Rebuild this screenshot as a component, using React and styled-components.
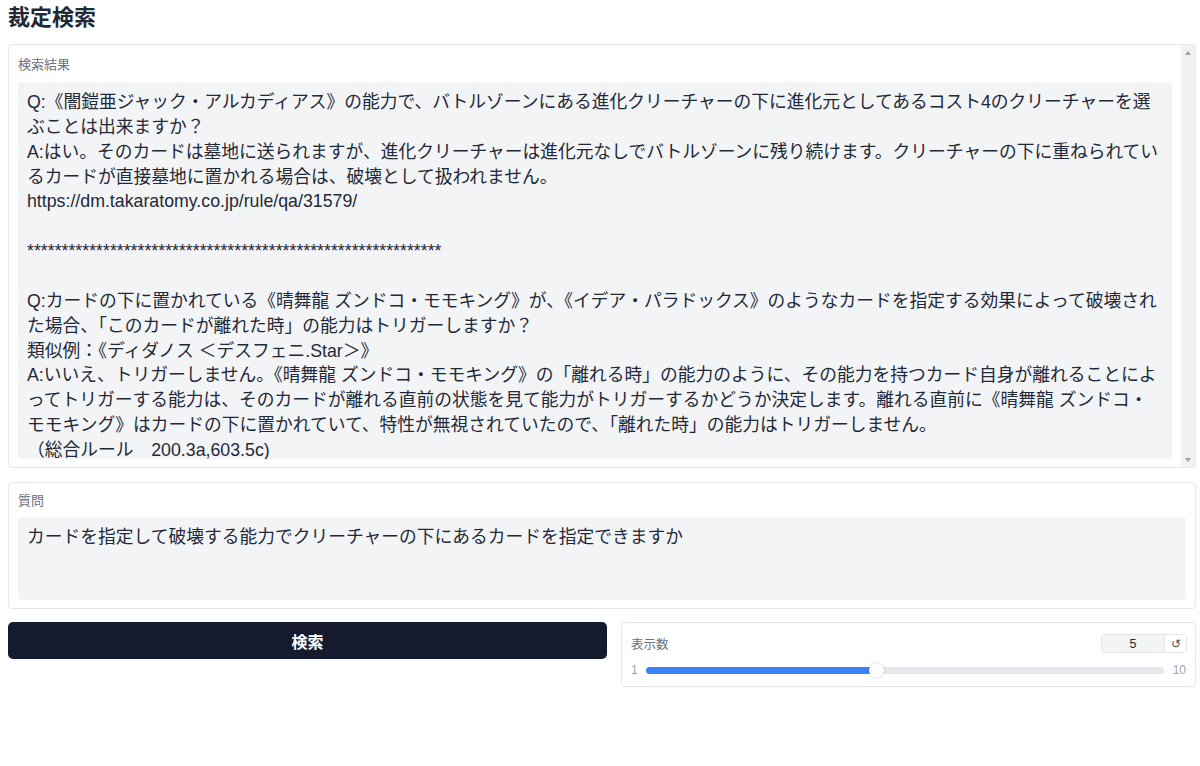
import React from "react";
import styled, { createGlobalStyle } from "styled-components";

const GlobalStyle = createGlobalStyle`
  html, body { margin: 0; padding: 0; background: #ffffff; }
  body {
    font-family: "Liberation Sans", "Noto Sans CJK JP", sans-serif;
    color: #1f2937;
  }
  * { box-sizing: border-box; }
`;

const Page = styled.div`
  display: flex;
  flex-direction: column;
  padding: 0 4px 0 8px;
  width: 1200px;
`;

const Title = styled.h1`
  margin: 0 0 8px 0;
  font-size: 22px;
  line-height: 36px;
  font-weight: 700;
  color: #1f2937;
`;

const Panel = styled.div`
  border: 1px solid #e5e7eb;
  border-radius: 4px;
  background: #ffffff;
  display: flex;
  overflow: hidden;
  height: ${(p) => p.$height || "auto"};
`;

const PanelBody = styled.div`
  flex: 1;
  min-width: 0;
  display: flex;
  flex-direction: column;
  padding: ${(p) => p.$pad};
`;

const ScrollRail = styled.div`
  flex: 0 0 14px;
  background: #f1f1f1;
  display: flex;
  flex-direction: column;
  justify-content: space-between;
  align-items: center;
  padding: 6px 0 5px;
`;

const Arrow = styled.div`
  width: 0;
  height: 0;
  border-left: 3.5px solid transparent;
  border-right: 3.5px solid transparent;
  ${(p) =>
    p.$down
      ? "border-top: 4px solid #a3a3a3;"
      : "border-bottom: 4px solid #a3a3a3;"}
`;

const Label = styled.div`
  font-size: 13px;
  line-height: 18px;
  color: #6b7280;
  margin-bottom: ${(p) => p.$gap || 7}px;
`;

const TextBox = styled.div`
  background: #f3f4f6;
  border-radius: 4px;
  padding: 8px 9px;
  height: ${(p) => p.$height}px;
  overflow: hidden;
  flex-shrink: 0;
  font-size: 17.75px;
  line-height: 24.86px;
  color: #1f2937;
  white-space: pre;
`;

const Gap = styled.div`
  height: ${(p) => p.$h}px;
  flex-shrink: 0;
`;

const Row = styled.div`
  display: flex;
  align-items: flex-start;
  gap: 14px;
`;

const SearchButton = styled.button`
  flex: 0 0 599px;
  height: 37px;
  border: none;
  border-radius: 5px;
  background: #151b2c;
  color: #ffffff;
  font-family: "Liberation Sans", "Noto Sans CJK JP", sans-serif;
  font-size: 16px;
  font-weight: 700;
  cursor: pointer;
`;

const SliderPanel = styled.div`
  flex: 1;
  height: 65px;
  border: 1px solid #e5e7eb;
  border-radius: 4px;
  padding: 11px 9px 0 9px;
  display: flex;
  flex-direction: column;
`;

const SliderHead = styled.div`
  display: flex;
  justify-content: space-between;
  align-items: center;
  height: 19px;
`;

const SmallLabel = styled.span`
  font-size: 12.5px;
  color: #6b7280;
`;

const NumberGroup = styled.div`
  display: flex;
  height: 19px;
  border: 1px solid #e5e7eb;
  border-radius: 3px;
  overflow: hidden;
  margin-right: -1px;
`;

const NumberValue = styled.div`
  width: 62px;
  background: #f3f4f6;
  display: flex;
  align-items: center;
  justify-content: center;
  font-size: 12.5px;
  color: #1f2937;
`;

const ResetButton = styled.div`
  width: 22px;
  background: #ffffff;
  border-left: 1px solid #e5e7eb;
  display: flex;
  align-items: center;
  justify-content: center;
  font-size: 12px;
  color: #4b5563;
`;

const SliderRow = styled.div`
  display: flex;
  align-items: center;
  height: 20px;
  margin-top: 7px;
  gap: 8px;
`;

const RangeNum = styled.span`
  font-size: 12px;
  color: #9ca3af;
  width: ${(p) => p.$w}px;
  text-align: ${(p) => p.$align};
`;

const Track = styled.div`
  position: relative;
  flex: 1;
  height: 7px;
  border-radius: 4px;
  background: #e5e7eb;
`;

const Fill = styled.div`
  height: 100%;
  border-radius: 4px 0 0 4px;
  background: #3b82f6;
`;

const Thumb = styled.div`
  position: absolute;
  top: 50%;
  width: 15px;
  height: 15px;
  margin: -7.5px 0 0 -7.5px;
  border-radius: 50%;
  background: #ffffff;
  box-shadow: 0 0 2px rgba(0, 0, 0, 0.25);
`;

const resultText = [
  "Q:《闇鎧亜ジャック・アルカディアス》の能力で、バトルゾーンにある進化クリーチャーの下に進化元としてあるコスト4のクリーチャーを選",
  "ぶことは出来ますか？",
  "A:はい。そのカードは墓地に送られますが、進化クリーチャーは進化元なしでバトルゾーンに残り続けます。クリーチャーの下に重ねられてい",
  "るカードが直接墓地に置かれる場合は、破壊として扱われません。",
  "https://dm.takaratomy.co.jp/rule/qa/31579/",
  "",
  "*".repeat(60),
  "",
  "Q:カードの下に置かれている《晴舞龍 ズンドコ・モモキング》が、《イデア・パラドックス》のようなカードを指定する効果によって破壊され",
  "た場合、「このカードが離れた時」の能力はトリガーしますか？",
  "類似例：《ディダノス ＜デスフェニ.Star＞》",
  "A:いいえ、トリガーしません。《晴舞龍 ズンドコ・モモキング》の「離れる時」の能力のように、その能力を持つカード自身が離れることによ",
  "ってトリガーする能力は、そのカードが離れる直前の状態を見て能力がトリガーするかどうか決定します。離れる直前に《晴舞龍 ズンドコ・",
  "モモキング》はカードの下に置かれていて、特性が無視されていたので、「離れた時」の能力はトリガーしません。",
  "（総合ルール　200.3a,603.5c)",
  "",
].join("\n");

export default function App() {
  const min = 1;
  const max = 10;
  const value = 5;
  const pct = ((value - min) / (max - min)) * 100;

  return (
    <>
      <GlobalStyle />
      <Page>
        <Title>裁定検索</Title>
        <Panel $height="424px">
          <PanelBody $pad="11px 9px 8px 9px">
            <Label $gap={8}>検索結果</Label>
            <TextBox $height={377}>{resultText}</TextBox>
          </PanelBody>
          <ScrollRail>
            <Arrow />
            <Arrow $down />
          </ScrollRail>
        </Panel>
        <Gap $h={14} />
        <Panel>
          <PanelBody $pad="9px 9px 8px 9px">
            <Label>質問</Label>
            <TextBox $height={83}>
              カードを指定して破壊する能力でクリーチャーの下にあるカードを指定できますか
            </TextBox>
          </PanelBody>
        </Panel>
        <Gap $h={13} />
        <Row>
          <SearchButton>検索</SearchButton>
          <SliderPanel>
            <SliderHead>
              <SmallLabel>表示数</SmallLabel>
              <NumberGroup>
                <NumberValue>{value}</NumberValue>
                <ResetButton>↺</ResetButton>
              </NumberGroup>
            </SliderHead>
            <SliderRow>
              <RangeNum $w={7} $align="left">{min}</RangeNum>
              <Track>
                <Fill style={{ width: `${pct}%` }} />
                <Thumb style={{ left: `${pct}%` }} />
              </Track>
              <RangeNum $w={14} $align="right">{max}</RangeNum>
            </SliderRow>
          </SliderPanel>
        </Row>
      </Page>
    </>
  );
}
